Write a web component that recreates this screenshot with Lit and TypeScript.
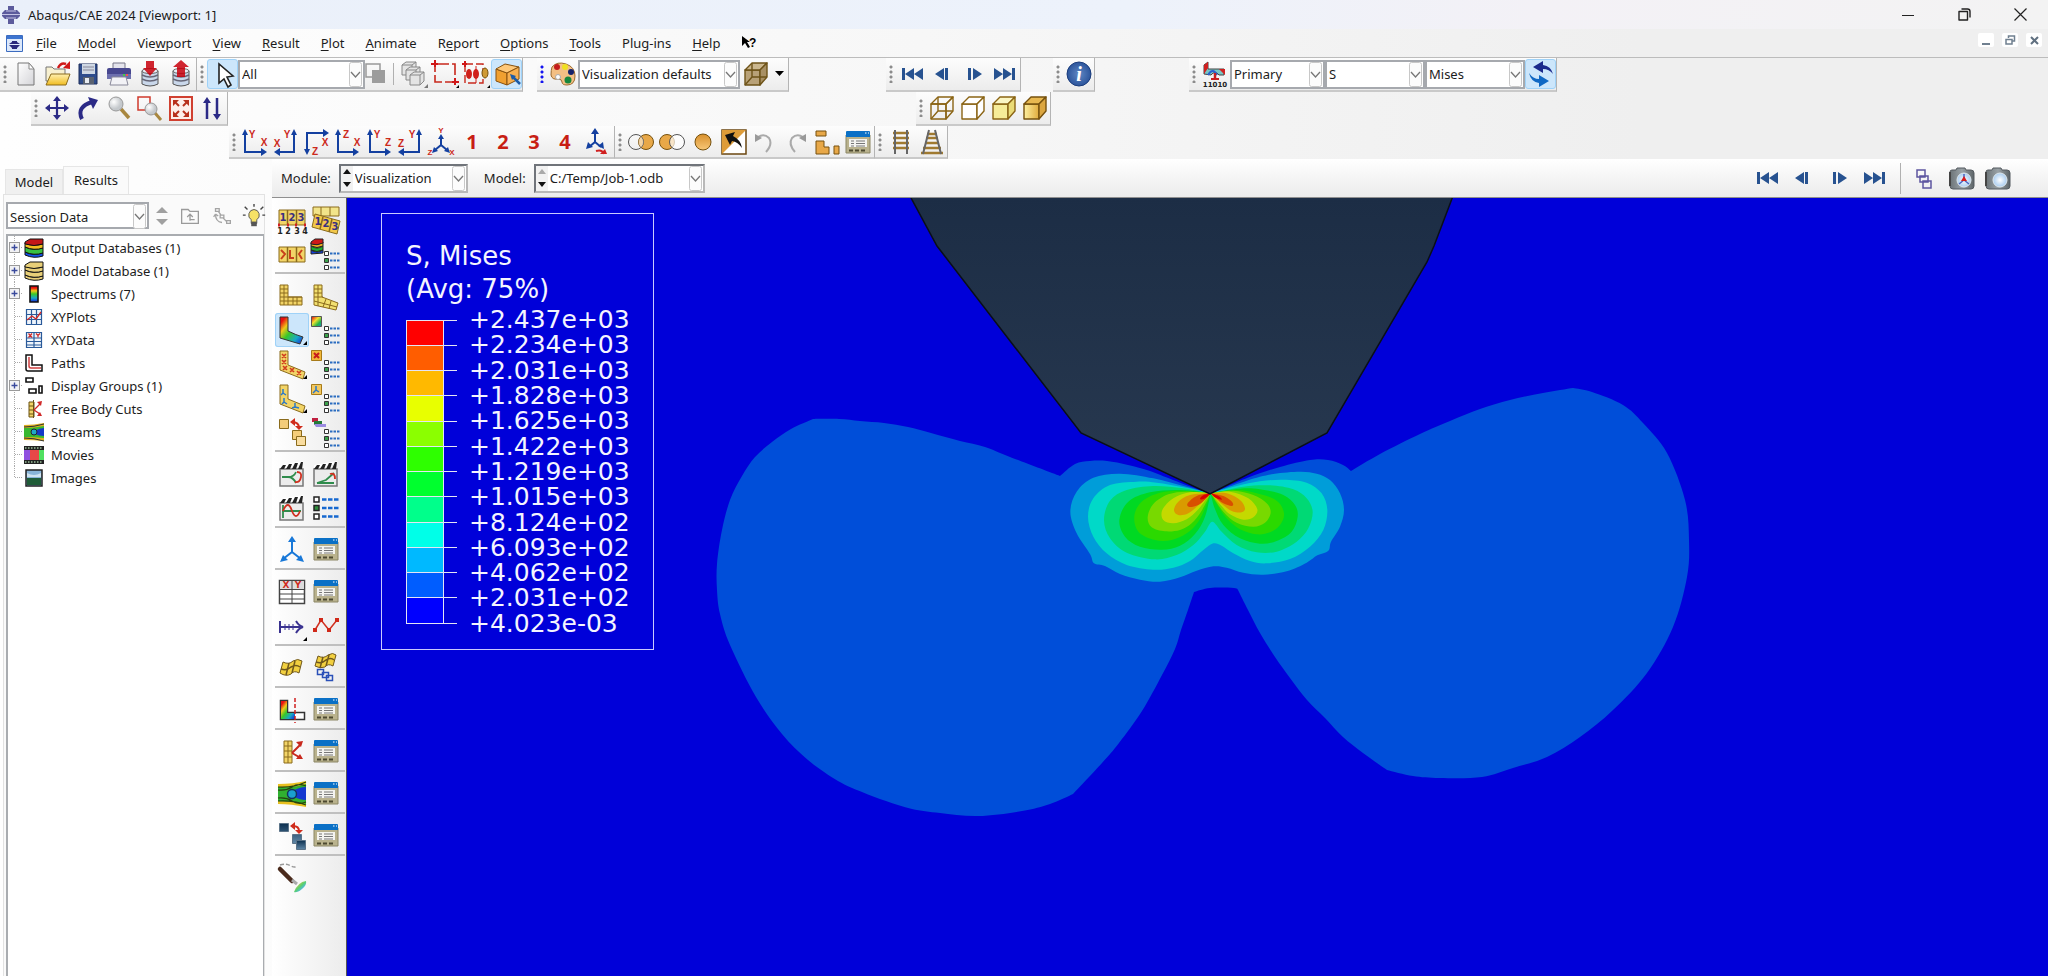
import { LitElement, html, svg, css, nothing, SVGTemplateResult, TemplateResult } from "lit";
import { customElement } from "lit/decorators.js";
import { classMap } from "lit/directives/class-map.js";

type Point = [number, number];

/** Cubic segments of a smooth open curve through the points. */
function curve(p: Point[]): string {
  let d = "";
  for (let i = 0; i < p.length - 1; i++) {
    const a = p[Math.max(i - 1, 0)], b = p[i], c = p[i + 1], e = p[Math.min(i + 2, p.length - 1)];
    const x1 = b[0] + (c[0] - a[0]) / 6, y1 = b[1] + (c[1] - a[1]) / 6;
    const x2 = c[0] - (e[0] - b[0]) / 6, y2 = c[1] - (e[1] - b[1]) / 6;
    d += `C${x1.toFixed(1)} ${y1.toFixed(1)} ${x2.toFixed(1)} ${y2.toFixed(1)} ${c[0]} ${c[1]}`;
  }
  return d;
}

/** Smooth closed outline that starts and ends in a sharp corner at the first point. */
const lobe = (points: Point[]) => `M${points[0].join(" ")}${curve([...points, points[0]])}Z`;

/** Outline built of smooth runs; every run begins at the corner where the previous one ended. */
const outline = (runs: Point[][]) => {
  let last = runs[0][0];
  let d = `M${last.join(" ")}`;
  runs.forEach((run, i) => {
    d += curve(i ? [last, ...run] : run);
    last = run[run.length - 1];
  });
  return d + "Z";
};

const OUTER: Point[][] = [
  [[1210, 494], [1173, 480], [1150, 471], [1128, 465], [1107, 461], [1090, 461], [1075, 464], [1060, 476]],
  [[1010, 457], [985, 447], [960, 441], [931, 433], [908, 427], [884, 423], [860, 421], [839, 419], [813, 419]],
  [[791, 429], [772, 442], [755, 457], [742, 476], [730, 500], [722, 530], [717, 564], [717, 590], [720, 614], [730, 645], [756, 697], [782, 734], [808, 760], [838, 781], [862, 792], [886, 801], [912, 809], [940, 813], [978, 816], [1022, 811], [1050, 804], [1073, 794]],
  [[1102, 763], [1119, 743], [1142, 711], [1162, 675], [1175, 649], [1181, 630], [1188, 610], [1194, 592]],
  [[1210, 588], [1234, 588], [1238, 590]],
  [[1248, 610], [1260, 633], [1275, 657], [1290, 678], [1307, 700], [1325, 718], [1343, 737], [1363, 753], [1387, 770]],
  [[1413, 776], [1440, 778], [1482, 777], [1513, 768], [1547, 757], [1580, 737], [1613, 710], [1647, 673], [1673, 627], [1687, 577], [1689, 540], [1685, 500], [1667, 453], [1643, 423], [1623, 405], [1592, 392], [1573, 388]],
  [[1543, 393], [1510, 400], [1480, 409], [1450, 421], [1420, 434], [1380, 454], [1351, 471]],
  [[1343, 465], [1328, 460], [1310, 460], [1280, 467], [1247, 478], [1210, 494]],
];

const TIP: Point = [512, 190];
const CONTOURS: { color: string; points: Point[] }[] = [
  { color: "#009dd9", points: [TIP, [430, 168], [340, 145], [240, 131], [160, 143], [110, 185], [91, 245], [110, 310], [150, 372], [162, 400], [195, 408], [240, 432], [300, 449], [360, 455], [420, 442], [470, 422], [520, 409], [560, 413], [610, 428], [670, 434], [740, 424], [800, 398], [832, 376], [865, 362], [873, 335], [900, 290], [912, 240], [900, 190], [870, 150], [830, 131], [780, 125], [700, 132], [620, 152]] },
  { color: "#00d9c8", points: [TIP, [430, 172], [350, 158], [290, 155], [210, 165], [160, 205], [144, 260], [160, 320], [200, 370], [260, 405], [340, 419], [400, 413], [450, 393], [490, 360], [520, 340], [545, 347], [580, 370], [630, 393], [680, 400], [750, 387], [810, 350], [850, 300], [862, 240], [845, 190], [800, 158], [730, 149], [660, 154], [590, 168]] },
  { color: "#00d975", points: [TIP, [430, 175], [340, 168], [260, 180], [210, 212], [192, 270], [210, 325], [260, 368], [345, 388], [410, 375], [460, 345], [495, 305], [517, 275], [545, 305], [590, 345], [650, 367], [710, 365], [770, 335], [805, 295], [818, 245], [800, 205], [760, 178], [690, 166], [610, 170]] },
  { color: "#00d923", points: [TIP, [420, 180], [330, 187], [265, 215], [238, 270], [255, 320], [300, 350], [365, 359], [420, 347], [465, 312], [495, 260]] },
  { color: "#00d923", points: [TIP, [600, 176], [660, 178], [730, 195], [765, 225], [773, 260], [755, 305], [710, 333], [660, 341], [600, 325], [550, 285], [524, 235]] },
  { color: "#2bd900", points: [TIP, [430, 182], [360, 188], [305, 215], [283, 258], [295, 305], [345, 330], [395, 330], [440, 310], [475, 275], [498, 228]] },
  { color: "#2bd900", points: [TIP, [590, 180], [650, 190], [710, 212], [732, 250], [720, 285], [690, 307], [650, 313], [600, 298], [560, 265], [529, 220]] },
  { color: "#78d900", points: [TIP, [440, 185], [385, 193], [340, 222], [323, 262], [335, 292], [375, 304], [420, 300], [455, 280], [485, 242]] },
  { color: "#78d900", points: [TIP, [580, 182], [640, 195], [680, 220], [692, 248], [675, 278], [640, 290], [590, 278], [550, 245]] },
  { color: "#c4d900", points: [TIP, [450, 187], [400, 205], [367, 240], [370, 270], [400, 280], [440, 268], [475, 238]] },
  { color: "#c4d900", points: [TIP, [570, 185], [625, 205], [652, 238], [640, 262], [610, 269], [570, 253], [540, 223]] },
  { color: "#d99b00", points: [TIP, [450, 195], [415, 215], [402, 240], [415, 255], [445, 250], [482, 220]] },
  { color: "#d99b00", points: [TIP, [560, 190], [600, 210], [615, 235], [605, 247], [575, 243], [543, 220]] },
  { color: "#d94e00", points: [TIP, [470, 198], [443, 220], [448, 231], [475, 225], [497, 207]] },
  { color: "#d94e00", points: [TIP, [555, 200], [578, 218], [575, 228], [550, 220], [530, 205]] },
  { color: "#d90000", points: [TIP, [490, 196], [480, 206], [488, 208], [502, 200]] },
  { color: "#d90000", points: [TIP, [535, 198], [546, 208], [538, 208], [522, 200]] },
];

const LEGEND_COLORS = ["#ff0000", "#ff5d00", "#ffb900", "#e8ff00", "#8bff00", "#2eff00", "#00ff2e", "#00ff8b", "#00ffe8", "#00b9ff", "#005dff", "#0000ff"];
const LEGEND_LABELS = ["+2.437e+03", "+2.234e+03", "+2.031e+03", "+1.828e+03", "+1.625e+03", "+1.422e+03", "+1.219e+03", "+1.015e+03", "+8.124e+02", "+6.093e+02", "+4.062e+02", "+2.031e+02", "+4.023e-03"];

/* ---------- shared pieces of icons ---------- */
const flyout = svg`<path d="M32 28v4h-4z" fill="#000"/>`;
const optionList = svg`
  <g fill="#fff" stroke="#333"><path d="M15.500 13.500h4v4h-4zM15.500 27.500h4v4h-4z"/><path d="M15.500 20.500h4v4h-4z" fill="#3aa04a"/></g>
  <path d="M21 15.500h10M21 22.500h10M21 29.500h10" stroke="#2a6cc0" stroke-width="2" stroke-dasharray="2.500 1"/>`;
const cube = (front: string, top: string, side: string, hidden: boolean, line = "#8a6414") => svg`
  <g stroke=${line} stroke-width="1.400" stroke-linejoin="round">
    <path d="M3 10h15v15H3z" fill=${front}/><path d="M3 10l7-7h15l-7 7z" fill=${top}/><path d="M18 10l7-7v14l-7 8z" fill=${side}/>
    ${hidden ? svg`<path d="M10 3v14h15M10 17l-7 8" fill="none"/>` : nothing}
  </g>`;
const axes = (path: string, heads: string, a: string, ax: number, ay: number, b: string, bx: number, by: number) => svg`
  <path d=${path} fill="none" stroke="#1440a0" stroke-width="2"/><path d=${heads} fill="#1440a0"/>
  <g class="axis"><text x=${ax} y=${ay}>${a}</text><text x=${bx} y=${by}>${b}</text></g>`;
const digit = (n: string) => svg`<text class="digit" x="14" y="21" text-anchor="middle">${n}</text>`;
const clapper = (inner: SVGTemplateResult) => svg`
  <path d="M5 12h23v17H5z" fill="#ececec" stroke="#777" stroke-width="1.500"/>
  <path d="M5 8l23-4v3l-23 4z" fill="#fff"/><path d="M5 12l3-4h3l-2 4zM11 12l3-5h3l-2 5zM17 12l3-6h3l-2 6zM23 12l3-7h2l-1 7z" fill="#222"/>${inner}`;
const database = svg`
  <path d="M6 11v13q8 4 16 0V11z" fill="#c9d7ea" stroke="#555"/><path d="M6 15q8 4 16 0M6 19q8 4 16 0" fill="none" stroke="#667" stroke-width="1.500"/>
  <ellipse cx="14" cy="11" rx="8" ry="2.500" fill="#e8eef6" stroke="#666"/>`;
const manager = svg`
  <path d="M5 9h24v18H5z" fill="#b9b28d" stroke="#8b8665"/><path d="M5 6q0-1 1-1h22q1 0 1 1v5H5z" fill="#0a70c6"/>
  <path d="M24 7h1.500M27 7h1" stroke="#fff"/>
  <path d="M8 13h18v8H8z" fill="#f4f4f0"/><path d="M10 15h3M15 15h9M10 17.500h3M15 17.500h9M10 20h3M15 20h9" stroke="#777"/>
  <path d="M8 23.500h4v2H8zM14 23.500h4v2h-4zM20 23.500h4v2h-4z" fill="#4d4930"/>`;
const bent = svg`<path d="M5 4h8v14l17 7-2 7-23-9z" fill="#f2d467" stroke="#8a6b1c"/>`;
const skipStart = svg`<path d="M4 8h3v12H4zM16 8v12l-9-6zM25 8v12l-9-6z" fill="#275290"/>`;
const stepBack = svg`<path d="M15 8v12l-9-6zM16 8h3v12h-3z" fill="#275290"/>`;
const stepFwd = svg`<path d="M8 8h3v12H8zM13 8v12l9-6z" fill="#275290"/>`;
const skipEnd = svg`<path d="M3 8v12l9-6zM12 8v12l9-6zM21 8h3v12h-3z" fill="#275290"/>`;
const camera = svg`
  <path d="M3 8q0-2 2-2h4l1-2h8l1 2h5q3 0 3 3v13q0 3-3 3H6q-3 0-3-3z" fill="url(#gSteel)" stroke="#555b60"/>
  <path d="M3 8v14" stroke="#444" stroke-width="2"/><circle cx="17" cy="16" r="7" fill="url(#gLens)" stroke="#dfe8ee"/>`;

const icons: Record<string, SVGTemplateResult> = {
  newFile: svg`<path d="M6 3h11l5 6v16H6z" fill="url(#gPage)" stroke="#777"/><path d="M17 3v6h5z" fill="#fff" stroke="#888"/>`,
  open: svg`<path d="M3 7h6l2 2h11v12H3z" fill="#f7f0d0" stroke="#777"/><path d="M8 14h19l-4 11H3z" fill="url(#gGold)" stroke="#8a6b1c"/><path d="M15 8q3-6 8-4" fill="none" stroke="#d01818" stroke-width="2.500"/><path d="M20 8l7 1V1z" fill="#d01818"/>`,
  save: svg`<path d="M5 4h18v20H5z" fill="#2e4c8c" stroke="#1d2c5a"/><path d="M8 4h13v10H8z" fill="#cfd8e4"/><path d="M9 7h11M9 10h11" stroke="#889"/><path d="M9 17h11v7H9z" fill="#5a6270"/><path d="M11 18h4v5h-4z" fill="#e8ecf2"/>`,
  print: svg`<path d="M8 3h12v8H8z" fill="#e4e4ec" stroke="#778"/><path d="M2 10q0-2 2-2h20q2 0 2 2v9H2z" fill="#47478f"/><path d="M2 14h24v5H2z" fill="#6d6fae"/><path d="M18 14h2v2h-2z" fill="#4c4"/><path d="M21 14h2v2h-2z" fill="#e55"/><path d="M7 17h14l2 8H5z" fill="#f2f2f6" stroke="#889"/>`,
  dbIn: svg`${database}<path d="M10 1h8v7h3l-7 8-7-8h3z" fill="#c8000c" fill-opacity=".85"/>`,
  dbOut: svg`${database}<path d="M10 17h8V7h4l-8-7-8 7h4z" fill="#c8000c" fill-opacity=".85"/>`,
  pointer: svg`<path d="M10 4v19l5-4 4 8 3-2-4-8 6-1z" fill="#fff" stroke="#222" stroke-width="1.600"/>`,
  overlap: svg`<path d="M3 4h14v13H3z" fill="none" stroke="#999" stroke-width="1.500"/><path d="M9 10h13v13H9z" fill="#9c9c9c"/>`,
  cubes: svg`<g fill="#e4e4e4" stroke="#888"><path d="M2 5l4-3h10v10l-4 3H2zM2 5h10v10M12 5l4-3"/><path d="M6 10l4-3h10v10l-4 3H6zM6 10h10v10M16 10l4-3"/><path d="M10 15l4-3h10v9l-4 4H10zM10 15h10v10M20 15l4-3"/></g><path d="M28 24v4h-4z" fill="#777"/>`,
  dragBox: svg`<path d="M4 4h20v18H4z" fill="none" stroke="#c8281c" stroke-width="1.600" stroke-dasharray="14 3"/><path d="M0 4h7M4 0v7M21 22h7M24 18v7" stroke="#d01818" stroke-width="2"/><path d="M28 25v3h-3z" fill="#000"/>`,
  dragItems: svg`<path d="M3 4h18v19H3z" fill="none" stroke="#c8281c" stroke-width="1.400" stroke-dasharray="8 3"/><path d="M0 4h5M3 1v6" stroke="#d01818" stroke-width="2"/><g fill="#d0201a"><ellipse cx="7" cy="14" rx="3" ry="5"/><ellipse cx="14" cy="14" rx="3" ry="5"/></g><path d="M14 6v17" stroke="#d0201a"/><ellipse cx="23" cy="13" rx="3" ry="5" fill="#cf9a34" stroke="#76520e"/><path d="M28 25v3h-3z" fill="#000"/>`,
  goldBox: svg`<g stroke="#87510e" stroke-linejoin="round"><path d="M3 9l11 4v12L3 21z" fill="#f0a030"/><path d="M3 9l9-5 14 3-12 6z" fill="#ffc878"/><path d="M14 13l12-6v12l-12 6z" fill="#f8b050"/></g><path d="M27 24l-7-7" stroke="#1c5ca8" stroke-width="2.500"/><path d="M17 14l6 2-4 4z" fill="#1c5ca8"/>`,
  palette: svg`<path d="M3 7q5-6 14-3 9 3 9 12 0 9-8 9-5 0-5-3 0-3-4-3-6 1-7-4 0-5 1-8z" fill="#f3bf84" stroke="#9b6a30"/><circle cx="8" cy="7" r="3" fill="#c41c1c"/><circle cx="16" cy="7" r="3" fill="#f0e020"/><circle cx="22" cy="12" r="3" fill="#14226c"/><circle cx="19" cy="20" r="3.500" fill="#17863c"/><circle cx="9" cy="17" r="2.500" fill="#fff" stroke="#aaa"/>`,
  tanCube: cube("#b8a177", "#cbb78e", "#a89064", true, "#6e5318"),
  skipStart, stepBack, stepFwd, skipEnd,
  info: svg`<circle cx="14" cy="14" r="12" fill="url(#gInfo)" stroke="#1c3d7c"/><text x="14" y="21" text-anchor="middle" font-family="Liberation Serif, serif" font-size="20" font-style="italic" font-weight="700" fill="#fff">i</text>`,
  fieldOut: svg`<path d="M3 14V5l4-3v7h16v6h-5q-4-5-8 0z" fill="#77c6c4" stroke="#444"/><path d="M3 5l4-3v6l-4 6zM18 9h6v6z" fill="#d02020"/><path d="M7 15q5-8 9 0" fill="none" stroke="#2a60d0" stroke-width="2"/><path d="M14 13v6" stroke="#c82020" stroke-width="2.500"/><path d="M10 19h8" stroke="#c82020" stroke-width="2"/><text x="14" y="27" text-anchor="middle" font-family="DejaVu Sans, sans-serif" font-size="7" font-weight="700" fill="#222">11010</text>`,
  refresh: svg`<path d="M26 14q-2-8-10-9V1L6 7l10 6V9q6 0 10 5z" fill="#1b2a8c"/><path d="M2 13q2 9 10 10v4l10-6-10-6v4q-6 0-10-6z" fill="#0f68c4"/>`,
  pan: svg`<path d="M14 5v18M5 14h18" stroke="#2b2a86" stroke-width="2.200"/><path d="M14 2l4 5h-8zM14 26l4-5h-8zM2 14l5-4v8zM26 14l-5-4v8z" fill="#2b2a86"/>`,
  rotate: svg`<path d="M8 25Q2 13 18 8" fill="none" stroke="#2b2a86" stroke-width="4"/><path d="M14 3l10 3-5 9z" fill="#2b2a86"/>`,
  magnify: svg`<path d="M16 15l8 9" stroke="#a8873f" stroke-width="3.500"/><circle cx="11" cy="10" r="7" fill="url(#gGlass)" stroke="#999"/>`,
  zoomBox: svg`<path d="M2 3h12v13H2z" fill="none" stroke="#d03a2c" stroke-width="1.500"/><path d="M19 19l6 7" stroke="#a8873f" stroke-width="3"/><circle cx="15" cy="15" r="6" fill="url(#gGlass)" stroke="#999"/>`,
  fit: svg`<path d="M3 3h22v23H3z" fill="#fdeeea" stroke="#d04030" stroke-width="2"/><g fill="#b8301c"><path d="M6 6h6L6 12zM22 6v6l-6-6zM6 23v-6l6 6zM22 23h-6l6-6z"/></g><path d="M8 8l4 4M20 8l-4 4M8 21l4-4M20 21l-4-4" stroke="#b8301c" stroke-width="2"/>`,
  cycle: svg`<path d="M9 25V8M19 4v17" stroke="#2b2a86" stroke-width="2.500"/><path d="M9 3l4 6H5zM19 26l4-6h-8z" fill="#2b2a86"/>`,
  wire: cube("none", "none", "none", true),
  hiddenLine: cube("#fff", "#fff", "#fff", false),
  filled: cube("#f6ec98", "#fbf6c4", "#eadb78", false),
  shaded: cube("url(#gShade)", "#e8b850", "#dba640", false, "#76510e"),
  vXY: axes("M4 6v18h17", "M4 1l3 6H1zM26 24l-6-4v8z", "Y", 11, 10, "X", 23, 18),
  vYX: axes("M22 6v18H7", "M22 1l3 6h-6zM2 24l6-4v8z", "Y", 15, 10, "X", 5, 19),
  vZX: axes("M4 21V5h16", "M26 5l-6-4v8zM4 27l3-6H1z", "Z", 12, 27, "X", 22, 18),
  vZXu: axes("M4 6v18h16", "M4 1l3 6H1zM25 24l-6-4v8z", "Z", 12, 10, "X", 23, 18),
  vYZ: axes("M5 6v18h16", "M5 1l3 6H2zM26 24l-6-4v8z", "Y", 12, 10, "Z", 23, 18),
  vZY: axes("M23 6v18H7", "M23 1l3 6h-6zM2 24l6-4v8z", "Y", 16, 10, "Z", 5, 19),
  iso: svg`<path d="M14 9v8l-6 5M14 17l6 5" fill="none" stroke="#1440a0" stroke-width="2"/><path d="M14 6l3 5h-6zM5 25l2-6 4 4zM23 25l-2-6-4 4z" fill="#1440a0"/><g class="axis small"><text x="14" y="5">Y</text><text x="3" y="27">Z</text><text x="25" y="27">X</text></g>`,
  d1: digit("1"), d2: digit("2"), d3: digit("3"), d4: digit("4"),
  isoSave: svg`<path d="M13 5v9l-6 5M13 14l6 5" fill="none" stroke="#1440a0" stroke-width="2"/><path d="M13 0l4 6H9zM4 21l2-7 5 5zM22 21l-1-7-5 4z" fill="#1440a0"/><path d="M14 23q6-2 8 3" fill="none" stroke="#d02020" stroke-width="2"/><path d="M18 26h7l-2-5z" fill="#d02020"/>`,
  boolOr: svg`<circle cx="19" cy="14" r="7.500" fill="#e8a848" stroke="#76510e"/><circle cx="9" cy="14" r="7.500" fill="none" stroke="#555"/><path d="M14 8.500q5 5.500 0 11-5-5.500 0-11z" fill="#fff" fill-opacity=".5"/>`,
  boolDiff: svg`<circle cx="9" cy="14" r="7.500" fill="#e8a848" stroke="#76510e"/><circle cx="19" cy="14" r="7.500" fill="#fff" fill-opacity=".7" stroke="#555"/>`,
  ball: svg`<circle cx="14" cy="14" r="8" fill="url(#gGold2)" stroke="#76510e"/>`,
  replace: svg`<path d="M2 2h24v24H2z" fill="#fff" stroke="#6b4710" stroke-width="1.500"/><path d="M2 2h24L2 26z" fill="#de9c38"/><path d="M5 7l10-3-2 4q8 4 9 12-4-6-10-7l-2 4z" fill="#111"/>`,
  undo: svg`<path d="M7 9q6-4 11 1 4 6-3 14" fill="none" stroke="#aaa" stroke-width="2"/><path d="M4 6v8l7-4z" fill="#999"/>`,
  redo: svg`<path d="M21 9q-6-4-11 1-4 6 3 14" fill="none" stroke="#aaa" stroke-width="2"/><path d="M24 6v8l-7-4z" fill="#999"/>`,
  parts: svg`<g fill="#e8a848" stroke="#76510e"><path d="M3 3h10v5H3zM3 13h8v6h5v7H3zM21 18h5v8h-5z"/></g>`,
  mgrSmall: svg`<g transform="translate(-3 -2)">${manager}</g>`,
  ladder: svg`<path d="M6 5h16M6 10h16M6 15h16M6 20h16" stroke="#a07a30" stroke-width="2.500"/><path d="M8 2v24M20 2v24" stroke="#666" stroke-width="2"/>`,
  track: svg`<path d="M9 6h10M8 10h12M7 15h14M5 20h18M3 25h22" stroke="#a07a30" stroke-width="2.500"/><path d="M11 2L5 26M17 2l6 24" stroke="#666" stroke-width="2"/>`,
  cascade: svg`<path d="M6 6h8v7H6zM9 12h8v6H9zM12 17h8v7h-8z" fill="none" stroke="#5d55a0" stroke-width="1.500"/>`,
  cameraAxes: svg`${camera}<path d="M17 16v-6M17 16l-5 4M17 16l5 4" stroke="#4a64c0" stroke-width="1.500"/><path d="M17 12l3 5h-6z" fill="#d81c1c"/>`,
  camera,
  folderUp: svg`<path d="M5 7h7l2 2h9v13H5z" fill="none" stroke="#9a9a9a" stroke-width="1.400"/><path d="M14 19v-6M11 15l3-3 3 3M14 18h5" fill="none" stroke="#9a9a9a" stroke-width="1.400"/>`,
  treeSync: svg`<path d="M7 6h4v3H7zM12 13h4v3h-4zM19 19h4v3h-4zM10 9l3 4M15 16l4 4M7 12q0 8 7 9M7 12l-2 3M7 12l3 2" fill="none" stroke="#a4a4a4" stroke-width="1.400"/>`,
  bulb: svg`<path d="M14 7a6 6 0 0 1 3 11v4h-6v-4a6 6 0 0 1 3-11z" fill="#f6e266" stroke="#555"/><path d="M11 20h6v5h-6z" fill="#555"/><path d="M14 1v3M4 4l3 3M24 4l-3 3M2 13h3M23 13h3" stroke="#444" stroke-width="1.500"/>`,

  /* 34px toolbox pictures */
  nodes: svg`<path d="M4 7h26v15H4z" fill="#f2d467" stroke="#8a6b1c"/><path d="M12.500 7v15M21.500 7v15" stroke="#8a6b1c" stroke-width="1.500"/><g class="num"><text x="8" y="18">1</text><text x="17" y="18">2</text><text x="26" y="18">3</text></g><path d="M3 22h2M12 22h2M20 22h2M29 22h2" stroke="#d02020" stroke-width="3"/><g class="tiny"><text x="5" y="31">1</text><text x="13" y="31">2</text><text x="22" y="31">3</text><text x="30" y="31">4</text></g>`,
  nodesBent: svg`<path d="M4 4h26v9H4z" fill="#f2e48a" stroke="#8a6b1c"/><path d="M12 4v9M21 4v9" stroke="#8a6b1c"/><path d="M6 11l25 7-3 13L3 24z" fill="#f2c84a" stroke="#8a6b1c"/><path d="M14 14l-3 12M23 16l-3 13" stroke="#8a6b1c" stroke-width="1.500"/><g class="num"><text x="9" y="22">1</text><text x="17" y="24">2</text><text x="26" y="27">3</text></g>`,
  orient: svg`<path d="M4 10h26v15H4z" fill="#f2d467" stroke="#8a6b1c"/><path d="M12.500 10v15M21.500 10v15" stroke="#8a6b1c" stroke-width="1.500"/><path d="M6 13l4 4-4 5M15 13v8h4M27 13l-3 4 3 5" fill="none" stroke="#c8401c" stroke-width="2"/>`,
  odbOptions: svg`<g stroke="#222"><path d="M2 13q6 4 12 0v3l-12 1z" fill="#1440e0"/><path d="M2 9q6 4 12 0v4q-6 3-12 0z" fill="#20b030"/><path d="M2 6q6 3 12-1v4q-6 3-12 0z" fill="#f0b020"/><path d="M2 5l4-3h8v4q-6 3-12 1z" fill="#d01818"/></g><g transform="translate(0 1)">${optionList}</g>`,
  lGrid: svg`<path d="M5 6h8v12h14v8H5z" fill="#f2d467" stroke="#8a6b1c"/><path d="M9 6v20M5 10h8M5 14h8M5 18h22M5 22h22M13 18v8M18 18v8M22 18v8" stroke="#8a6b1c"/>`,
  lBent: svg`<path d="M5 6h8v12l16 6-2 7-22-5z" fill="#f2e070" stroke="#8a6b1c"/><path d="M9 6v21M5 10h8M5 14h8M5 18h9M5 22l23 6M17 20l-3 8M22 22l-2 8" stroke="#8a6b1c" fill="none"/>`,
  contour: svg`<path d="M5 4h8v14q8 4 15 6l-3 7Q15 28 5 25z" fill="url(#gRainbow)" stroke="#333"/>${flyout}`,
  contourOpt: svg`<path d="M2.500 3.500h10v10h-10z" fill="url(#gDiag)" stroke="#555"/>${optionList}`,
  symbols: svg`${bent}<path d="M7 7l4 4M11 7l-4 4M7 13l4 4M11 13l-4 4M8 19l4 4M12 19l-4 4M15 21l4 4M19 21l-4 4M22 24l4 4M26 24l-4 4" stroke="#d03a1c" stroke-width="1.600"/>${flyout}`,
  symbolOpt: svg`<path d="M2.500 3.500h10v10h-10z" fill="#f2b83a" stroke="#a77a18"/><path d="M5 6l5 5M10 6l-5 5" stroke="#c81c1c" stroke-width="2"/>${optionList}`,
  material: svg`${bent}<path d="M8 8v4l-2 2M8 12l3 2M9 17v4l-2 2M9 21l3 2M20 22v4l-3 1M20 26l4 1" fill="none" stroke="#2a78c8" stroke-width="1.500"/>${flyout}`,
  materialOpt: svg`<path d="M2.500 3.500h10v10h-10z" fill="#f2c860" stroke="#a77a18"/><path d="M7 5v4l-3 3M7 9l3 2" fill="none" stroke="#2a78c8" stroke-width="1.500"/>${optionList}`,
  multi: svg`<g stroke="#8a6b1c" fill="#f4cd7a"><path d="M4.500 4.500h9v9h-9zM17.500 15.500h9v9h-9z"/><path d="M21.500 21.500h9v9h-9z" fill="#f9dda0"/></g><path d="M17 7q7 0 7 6" fill="none" stroke="#d02c1c" stroke-width="2"/><path d="M15 7l5-4v8zM24 15l-4-4h8z" fill="#d02c1c"/>`,
  multiOpt: svg`<path d="M3 3h6v4H3z" fill="#c02040"/><path d="M5 6h8v4H5z" fill="#257a38"/><path d="M5 9h12v3H7z" fill="#9a8be0"/><g transform="translate(0 1)">${optionList}</g>`,
  animTime: clapper(svg`<path d="M7 20h6q6 0 8-5M13 20q5 0 8 6" fill="none" stroke="#2f8c4c" stroke-width="1.800"/><path d="M22 15q5 0 4 5-1 6-6 5" fill="none" stroke="#d03020" stroke-width="1.800"/>`),
  animScale: clapper(svg`<path d="M8 26l9-3 8-7M8 26h17" fill="none" stroke="#2f8c4c" stroke-width="1.800"/><path d="M21 17q5-2 5 5" fill="none" stroke="#d03020" stroke-width="1.800"/>`),
  animHarm: clapper(svg`<path d="M7 20h19M8 14v13" stroke="#2f8c4c" stroke-width="1.800"/><path d="M8 20q5-12 9 0 4 10 8 0" fill="none" stroke="#d03020" stroke-width="1.800"/>`),
  animOpt: svg`<g fill="#fff" stroke="#222" stroke-width="1.500"><path d="M5 6h5v5H5zM5 23h5v5H5z"/><path d="M5 14.500h5v5H5z" fill="#2f8c3c"/></g><path d="M13 8.500h17M13 17h17M13 25.500h17" stroke="#1668d0" stroke-width="2.500" stroke-dasharray="4.500 1.500"/>`,
  csys: svg`<path d="M17 8v11l-9 7M17 19l9 7" fill="none" stroke="#1878d8" stroke-width="2"/><path d="M17 3l4 6h-8zM5 29l3-7 5 5zM29 29l-3-7-5 5z" fill="#1878d8"/>`,
  manager,
  xyData: svg`<path d="M4.500 5.500h25v23h-25z" fill="#fff" stroke="#444" stroke-width="1.500"/><path d="M5 6h24v8H5z" fill="#dcdcdc"/><path d="M5 14.500h24M5 19h24M5 24h24M17 6v23" stroke="#444"/><g class="redx"><text x="11" y="13">X</text><text x="23" y="13">Y</text></g>`,
  probe: svg`<path d="M5 18h20M5 12v12" stroke="#3a3290" stroke-width="2"/><path d="M10 15v6M14 15v6M18 15v6" stroke="#3a3290"/><path d="M21 12q3 5 7 6-4 1-7 6" fill="none" stroke="#3a3290" stroke-width="2"/>${flyout}`,
  polyline: svg`<path d="M6 21l6-10 8 10 8-10" fill="none" stroke="#d03020" stroke-width="1.500"/><path d="M4 19h4v4H4zM10 9h4v4h-4zM18 19h4v4h-4zM26 9h4v4h-4z" fill="#d02818"/>`,
  surf: svg`<path d="M8 11q6 3 10-1 5-3 9 0l-3 12q-5-3-8 1-5 3-11-1z" fill="#f2d040" stroke="#70581c"/><path d="M14 12l-3 12M20 10l-3 12M6 18q6 2 10-2 5-3 9 0" fill="none" stroke="#70581c" stroke-width="1.500"/>`,
  surfMulti: svg`<path d="M9 5q6 3 10-1 5-3 8 0l-3 11q-5-3-8 1-5 2-10-1z" fill="#f2d040" stroke="#70581c"/><path d="M14 6l-3 11M20 4l-3 11M7 11q6 2 10-2 5-3 8 0" fill="none" stroke="#70581c" stroke-width="1.500"/><path d="M8.500 18.500h6v5h-6zM13.500 21.500h6v5h-6zM17.500 24.500h6v5h-6z" fill="none" stroke="#2a50b8" stroke-width="1.500"/>`,
  cut: svg`<path d="M5.500 7.500h7v12h17v7h-24z" fill="#fff" stroke="#333" stroke-width="1.500"/><path d="M6 8h6v12h8v6H6z" fill="url(#gRainbow)"/><path d="M20 5v25" stroke="#d02020" stroke-width="1.500" stroke-dasharray="4 2"/>`,
  freeBody: svg`<path d="M9 6h8v22H9z" fill="#f2d467" stroke="#8a6b1c"/><path d="M13 6v22M9 11h8M9 16h8M9 22h8" stroke="#8a6b1c"/><path d="M17 18l8-8M17 18l7 4" stroke="#c8281c" stroke-width="2"/><path d="M28 6l-7 1 5 5zM28 24l-7 0 4-5z" fill="#c8281c"/>`,
  stream: svg`<path d="M3 7q15 0 28-3v26Q16 27 3 27z" fill="#e8c020"/><path d="M3 10q15 1 28-3v20Q16 24 3 24z" fill="#30b030"/><path d="M18 14q6-4 13-4v13q-7 0-13-4z" fill="#1438d0"/><path d="M3 10q15 1 28-5M3 24q15-1 28 4M3 13q8 1 14-3t14-1M3 21q8-1 14 3t14 1" fill="none" stroke="#26420e" stroke-width="1.200"/><circle cx="17" cy="17" r="4.500" fill="#1aa0d0" stroke="#14345c" stroke-width="1.500"/>`,
  imageMulti: svg`<g fill="url(#gNavy)" stroke="#5b7388"><path d="M4.500 4.500h9v8h-9zM17.500 15.500h9v9h-9z"/><path d="M21.500 21.500h9v9h-9z"/></g><path d="M18 7q6 0 6 5" fill="none" stroke="#d02c1c" stroke-width="2"/><path d="M15 7l5-4v8zM24 15l-4-4h8z" fill="#d02c1c"/>`,
  brush: svg`<path d="M5 4q6-2 11 1 4 2 6 0" fill="none" stroke="#999" stroke-width="1.500" stroke-dasharray="4 2"/><path d="M5 8l12 12" stroke="#4a2a1c" stroke-width="4.500" stroke-linecap="round"/><path d="M17 19l5 4" stroke="#aaa" stroke-width="3"/><path d="M19 31q4-10 12-11 1 4-4 8t-8 3z" fill="url(#gBrush)"/>`,
};

const treeIcons: SVGTemplateResult[] = [
  svg`<g stroke="#111"><path d="M1 14q8 4 18 1v3q-9 3-18-1z" fill="#1450e8"/><path d="M1 9q8 4 18 1v5q-9 3-18-1z" fill="#38c040"/><path d="M1 5q8 4 18 1v4q-9 3-18-1z" fill="#f0c020"/><path d="M1 4l5-3h13v5q-9 3-18 0z" fill="#c41818"/></g>`,
  svg`<g stroke="#111" fill="#e8cf78"><path d="M1 14q8 4 18 1v3q-9 3-18-1z"/><path d="M1 9q8 4 18 1v5q-9 3-18-1z"/><path d="M1 5q8 4 18 1v4q-9 3-18-1z"/><path d="M1 4l5-3h13v5q-9 3-18 0z"/></g>`,
  svg`<path d="M6 2h8v16H6z" fill="url(#gBar)" stroke="#111" stroke-width="1.600"/>`,
  svg`<path d="M2.500 2.500h15v15h-15zM7.500 2v16M12.500 2v16M2 7.500h16M2 12.500h16" fill="#eef4fb" stroke="#2a5a9a" stroke-width="1.200"/><path d="M3 13l5-4 4 3 5-7" fill="none" stroke="#d02828" stroke-width="1.300"/>`,
  svg`<path d="M2.500 2.500h15v15h-15zM10 2v16M2 8h16M2 11.500h16M2 15h16" fill="#eef4fb" stroke="#2a5a9a" stroke-width="1.200"/><path d="M4.500 3.500l3.500 4M8 3.500l-3.500 4M12 3.500l2 2 2-2M14 5.500v2" fill="none" stroke="#d02828" stroke-width="1.200"/>`,
  svg`<path d="M2 2h6v10h10v6H4q-2 0-2-2z" fill="#fff" stroke="#111" stroke-width="1.500"/><path d="M5 4v9q0 2 2 2h10" fill="none" stroke="#d04040" stroke-width="1.500"/>`,
  svg`<path d="M2 2h7v4H2zM5 13h7v4H5zM15 10h3v7h-3z" fill="#fff" stroke="#111" stroke-width="1.600"/>`,
  svg`<path d="M5 3h5v15H5z" fill="#f2d467" stroke="#6b5314"/><path d="M5 7h5M5 11h5M5 15h5M9.500 1v18" stroke="#6b5314"/><path d="M10 11l6-6M10 11l6 4" stroke="#d02828" stroke-width="1.300"/><path d="M18 2l-5 1 4 4zM18 17l-5 0 3-4z" fill="#d02828"/>`,
  svg`<path d="M0 3q10 0 20-2v18q-10-1-20-1z" fill="#e0b020"/><path d="M0 6q10 0 20-2v12q-10-1-20-1z" fill="#38b830"/><path d="M11 9q4-3 9-3v8q-5 0-9-2z" fill="#1438c8"/><path d="M0 5q10 0 20-3M0 16q10 0 20 3" stroke="#333" fill="none"/><circle cx="10" cy="10" r="3" fill="#20a8c8" stroke="#223"/>`,
  svg`<path d="M0 1h20v18H0z" fill="#222"/><path d="M1 3h18M1 17h18" stroke="#9ac09a" stroke-width="1.500" stroke-dasharray="1.500 1.500"/><path d="M0 5h6v10H0z" fill="#9050e0"/><path d="M6 5h9v10H6z" fill="#e84848"/><path d="M15 5h5v10h-5z" fill="#50e060"/>`,
  svg`<path d="M2 2h16v16H2z" fill="#88b4d8" stroke="#222" stroke-width="1.500"/><path d="M3 10h14v7H3z" fill="#1f5c38"/><path d="M3 5q7 4 14 0v4H3z" fill="#cfe2f0"/>`,
];

const TREE: { label: string; open?: boolean }[] = [
  { label: "Output Databases (1)", open: true }, { label: "Model Database (1)", open: true }, { label: "Spectrums (7)", open: true },
  { label: "XYPlots" }, { label: "XYData" }, { label: "Paths" }, { label: "Display Groups (1)", open: true },
  { label: "Free Body Cuts" }, { label: "Streams" }, { label: "Movies" }, { label: "Images" },
];

/* [text before the mnemonic, mnemonic, text after] */
const MENU: [string, string, string][] = [
  ["", "F", "ile"], ["", "M", "odel"], ["Vie", "w", "port"], ["", "V", "iew"], ["", "R", "esult"], ["", "P", "lot"],
  ["", "A", "nimate"], ["R", "e", "port"], ["", "O", "ptions"], ["", "T", "ools"], ["Plu", "g", "-ins"], ["", "H", "elp"],
];

const TOOLBOX: [string, string][][] = [
  [["nodes", "nodesBent"], ["orient", "odbOptions"]],
  [["lGrid", "lBent"], ["contour", "contourOpt"], ["symbols", "symbolOpt"], ["material", "materialOpt"], ["multi", "multiOpt"]],
  [["animTime", "animScale"], ["animHarm", "animOpt"]],
  [["csys", "manager"]],
  [["xyData", "manager"], ["probe", "polyline"]],
  [["surf", "surfMulti"]],
  [["cut", "manager"]],
  [["freeBody", "manager"]],
  [["stream", "manager"]],
  [["imageMulti", "manager"]],
  [["brush", ""]],
];

@customElement("app-root")
export class AppRoot extends LitElement {
  static styles = css`
    :host { display: flex; flex-direction: column; height: 100vh; overflow: hidden; font: 13px/20px "Noto Sans", "Open Sans", sans-serif; color: #1c1c1c; background: linear-gradient(90deg, #fefefe, #f7f7f7 45%, #efefef 80%); }
    * { box-sizing: border-box; }
    button { font: inherit; color: inherit; background: none; border: 1px solid transparent; padding: 0; margin: 0; display: flex; align-items: center; justify-content: center; }
    svg { display: block; flex: none; overflow: visible; }
    .defs { width: 0; height: 0; position: absolute; }

    .title { display: flex; align-items: center; height: 29px; padding-left: 2px; background: linear-gradient(90deg, #eaf0fa, #edf2fb 55%, #f3f1f6 75%, #f3f3f3); }
    .title h1 { flex: 1; margin: 0 0 0 8px; font-size: 13px; font-weight: 400; }
    .title button { width: 56px; height: 28px; }

    .menubar { display: flex; align-items: center; height: 29px; border-bottom: 1px solid #bcbcbc; padding: 0 6px; }
    .menubar nav { display: flex; flex: 1; align-items: center; gap: 21px; margin-left: 13px; }
    .menubar a { color: inherit; text-decoration: none; }
    .menubar u { text-underline-offset: 2px; }
    .child { display: flex; gap: 8px; }
    .child button { width: 16px; height: 14px; background: #fff; border-radius: 2px; margin-bottom: 6px; }

    .row { display: flex; height: 34px; }
    .row.last { height: 33px; }
    .group { display: flex; align-items: center; height: 100%; background: linear-gradient(#fdfdfd, #ececec); border-right: 1px solid #b4b4b4; border-bottom: 2px solid #c9c9c9; }
    .grip { width: 10px; height: 18px; background: radial-gradient(circle at 5px 2px, #8c8c8c 1px, transparent 2px) 0 0 / 10px 5px; }
    .grip.blue { background-image: radial-gradient(circle at 5px 2px, #1414f0 1px, transparent 2px); }
    .tool { width: 31px; height: 30px; flex: none; }
    .tool.narrow { width: 24px; }
    .tool.menu { width: 17px; }
    .active { background: #cce6fb; border-color: #9fd2f8; border-radius: 3px; }
    .bar { width: 1px; height: 22px; background: #b0b0b0; margin: 0 4px; }
    .g-color { margin-left: 14px; }
    .g-play { margin-left: 97px; }
    .g-info { margin-left: 32px; }
    .g-field { margin-left: 94px; }
    .g-view { margin-left: 31px; }
    .g-render { margin-left: 688px; }
    .g-axes { margin-left: 229px; padding-right: 3px; }
    .g-bool { padding-right: 1px; }

    .combo { display: grid; grid-template-columns: auto 1fr; flex: none; height: 29px; background: #fff; border: 2px solid #a6a9ae; }
    .combo select { grid-area: 1 / 2; width: 100%; min-width: 0; appearance: none; border: 0; outline: 0; background: none; font: inherit; color: inherit; padding: 0 16px 0 2px; }
    .combo .chevron { grid-area: 1 / 2; justify-self: end; pointer-events: none; }
    .spin { grid-area: 1 / 1; display: flex; flex-direction: column; width: 12px; background: #f2f2f2; }
    .spin button { flex: 1; }
    .w94 { width: 95px; } .w100 { width: 100px; } .w126 { width: 127px; } .w162 { width: 162px; }
    .w130 { width: 129px; } .w172 { width: 171px; } .w143 { width: 143px; }
    .sunk { border-color: #70747a #b8b8b8 #b8b8b8 #70747a; }

    .axis { font: 700 10px "Liberation Sans", sans-serif; fill: #cc2a1c; text-anchor: middle; }
    .axis.small { font-size: 8px; }
    .digit { font: 700 20px "Open Sans", sans-serif; fill: #c81e14; }
    .num { font: 700 10px "DejaVu Sans", sans-serif; fill: #3a2f80; text-anchor: middle; }
    .tiny { font: 700 8px "DejaVu Sans", sans-serif; fill: #222; text-anchor: middle; }
    .redx { font: 700 9px "DejaVu Sans", sans-serif; fill: #d02c1c; text-anchor: middle; }

    main { display: flex; flex: 1; min-height: 0; }
    aside { display: flex; flex-direction: column; width: 272px; padding: 7px 7px 0 3px; }
    .tabs { display: flex; align-items: flex-end; height: 28px; padding-left: 2px; }
    .tabs button { height: 25px; width: 58px; background: #f0f0f0; border-color: #e6e6e6; border-bottom: 0; }
    .tabs button.current { height: 28px; width: 66px; background: #fafafa; padding-bottom: 2px; }
    .panel { display: flex; flex-direction: column; flex: 1; min-height: 0; background: #fafafa; border: 1px solid #e2e2e2; border-bottom: 0; padding: 7px 0 0 2px; }
    .panel-tools { display: flex; align-items: center; height: 27px; margin-bottom: 5px; }
    .panel-tools .combo { height: 27px; }
    .updown { width: 25px; flex: none; display: flex; flex-direction: column; gap: 6px; align-items: center; }
    .panel-tools .tool { width: 32px; }
    .tree { list-style: none; margin: 0; padding: 0; flex: 1; background: #fff; border: 2px solid #a9acb0; border-right-width: 1px; border-bottom: 0; }
    .tree li { display: flex; align-items: center; height: 23px; white-space: nowrap; }
    .tree button { display: block; border: 0; }
    .tree .pic { margin: 0 7px 0 0; }

    .work { display: flex; flex-direction: column; flex: 1; min-width: 0; }
    .context { display: flex; align-items: center; height: 39px; padding-left: 9px; background: linear-gradient(#ffffff, #ebebeb); border-bottom: 1px solid #8f8f8f; }
    .context label { margin-right: 8px; }
    .context label.second { margin: 0 8px 0 16px; }
    .context .push { flex: 1; }
    .context .tool { width: 36px; }
    .context .bar { height: 31px; margin: 0 6px 0 7px; }
    .context .end { width: 33px; }
    .stage { display: flex; flex: 1; min-height: 0; }
    .toolbox { width: 74px; padding: 0 3px; background: linear-gradient(90deg, #ffffff, #ececec); overflow: hidden; }
    .toolbox section { padding: 5px 0 1px; border-bottom: 2px solid #bfbfbf; width: 70px; display: grid; grid-template-columns: 34px 34px; }
    .toolbox section:last-child { border: 0; }
    .toolbox button { width: 34px; height: 34px; border: 0; }
    .toolbox button.active { box-shadow: inset 0 0 0 1px #9fd2f8; }

    .canvas { position: relative; flex: 1; min-width: 0; background: #0000d9; border-left: 1px solid #555; overflow: hidden; }
    .canvas > svg { width: 100%; height: 100%; }
    .legend { position: absolute; left: 34px; top: 15px; width: 273px; border: 1px solid #c9c9ff; padding: 26px 0 13px 24px; color: #f4f4ff; font: 25px/33px "DejaVu Sans", Verdana, sans-serif; }
    .caption { font-size: 26px; }
    .scale { display: flex; align-items: center; height: 329px; margin-top: 1px; }
    .swatches { display: flex; flex-direction: column; width: 51px; height: 304px; margin-right: 12px; border-top: 1px solid #e4e4f4; }
    .swatches div { flex: 1; border-bottom: 1px solid #e4e4f4; display: flex; }
    .swatches i { width: 38px; border: solid #e4e4f4; border-width: 0 1px; }
    .labels { display: flex; flex-direction: column; height: 329px; margin: 0; padding: 0; list-style: none; }
    .labels li { flex: 1; line-height: 25px; }
  `;

  private icon(name: string, size = 28, vb = 28): TemplateResult {
    return html`<svg width=${size} height=${size} viewBox="0 0 ${vb} ${vb}" aria-hidden="true">${icons[name]}</svg>`;
  }

  private tool(name: string, extra: Record<string, boolean> = {}): TemplateResult {
    return html`<button class=${classMap({ tool: true, ...extra })} aria-label=${name}>${this.icon(name)}</button>`;
  }

  private combo(label: string, value: string, width: string, id = "", spin = false): TemplateResult {
    return html`<div class="combo ${width} ${spin ? "sunk" : ""}">
      ${spin ? html`<span class="spin">
        <button aria-label="Previous"><svg width="8" height="5"><path d="M0 5h8L4 0z" fill=${id === "model" ? "#aaa" : "#111"}/></svg></button>
        <button aria-label="Next"><svg width="8" height="5"><path d="M0 0h8L4 5z" fill="#111"/></svg></button></span>` : nothing}
      <select id=${id || nothing} aria-label=${label}><option>${value}</option></select>
      <svg class="chevron" width="14" height="25"><rect x="0.5" y="0.5" width="12" height="24" rx="2" fill="#fcfcfc" stroke="#c8c8c8"/><path d="M2 10l4.500 5 4.500-5" fill="none" stroke="#777" stroke-width="1.300"/></svg>
    </div>`;
  }

  private defs() {
    const rainbow = svg`<stop offset="0" stop-color="#e81010"/><stop offset=".12" stop-color="#e81010"/><stop offset=".3" stop-color="#f0c818"/><stop offset=".5" stop-color="#38c828"/><stop offset=".75" stop-color="#18a8c8"/><stop offset="1" stop-color="#1420d8"/>`;
    return html`<svg class="defs" aria-hidden="true"><defs>
      <linearGradient id="gPage" x2="1" y2="1"><stop stop-color="#fff"/><stop offset="1" stop-color="#d4d4d8"/></linearGradient>
      <linearGradient id="gGold" x2="0" y2="1"><stop stop-color="#fff0b0"/><stop offset="1" stop-color="#f0bc20"/></linearGradient>
      <linearGradient id="gGold2" x2="0" y2="1"><stop stop-color="#d8902c"/><stop offset="1" stop-color="#f8c878"/></linearGradient>
      <linearGradient id="gShade" x2="1"><stop stop-color="#fdf0a0"/><stop offset="1" stop-color="#e0aa3c"/></linearGradient>
      <linearGradient id="gSteel" x2="1"><stop stop-color="#6c7478"/><stop offset=".5" stop-color="#9aa2a6"/><stop offset="1" stop-color="#5c6468"/></linearGradient>
      <linearGradient id="gNavy" x2="0" y2="1"><stop stop-color="#0c3050"/><stop offset="1" stop-color="#6088a8"/></linearGradient>
      <linearGradient id="gBrush" x2="1" y2="1"><stop offset=".2" stop-color="#e8c848"/><stop offset=".5" stop-color="#58d070"/><stop offset=".7" stop-color="#50b8e0"/><stop offset=".9" stop-color="#f07050"/></linearGradient>
      <radialGradient id="gLens"><stop stop-color="#fff"/><stop offset="1" stop-color="#a8ccf0"/></radialGradient>
      <radialGradient id="gGlass" cx=".35" cy=".35"><stop stop-color="#fff"/><stop offset="1" stop-color="#c4c8cc"/></radialGradient>
      <radialGradient id="gInfo"><stop stop-color="#6088c4"/><stop offset="1" stop-color="#2c559c"/></radialGradient>
      <linearGradient id="gRainbow" x1="0" y1="0" x2="1" y2="1">${rainbow}</linearGradient>
      <linearGradient id="gDiag" x1="0" y1="0" x2="1" y2="1"><stop offset=".1" stop-color="#e83018"/><stop offset=".4" stop-color="#f0e030"/><stop offset=".7" stop-color="#28b848"/><stop offset="1" stop-color="#1888c8"/></linearGradient>
      <linearGradient id="gBar" x2="0" y2="1">${rainbow}</linearGradient>
    </defs></svg>`;
  }

  private branch(open: boolean, last: boolean) {
    return html`<svg width="16" height="23" aria-hidden="true">
      <path d="M6.500 0V${last ? 12 : 23}M7 11.500h7" fill="none" stroke="#aaa" stroke-dasharray="1 1"/>
      ${open ? svg`<rect x="1.500" y="6.500" width="10" height="10" fill="#f2f2f4" stroke="#9a9a9a"/><path d="M3.500 11.500h6M6.500 8.500v6" stroke="#3a4a9c" stroke-width="1.400"/>` : nothing}</svg>`;
  }

  render() {
    return html`
      ${this.defs()}
      <header class="title">
        <svg width="18" height="20" viewBox="0 0 18 20"><path d="M6 1h6v4h3l3 3v3l-3 3h-3v5H6v-5H3l-3-3V8l3-3h3z" fill="#5c5b9c"/><path d="M0 9.500h18M4 6h10M4 13h10" stroke="#c4c4e4"/></svg>
        <h1>Abaqus/CAE 2024 [Viewport: 1]</h1>
        <button aria-label="Minimize"><svg width="12" height="12"><path d="M0 6.500h12" stroke="#222"/></svg></button>
        <button aria-label="Restore"><svg width="13" height="13"><path d="M1 3.500h8.500v8.500H1z" fill="none" stroke="#222" stroke-width="1.400" stroke-linejoin="round"/><path d="M3.500 1h6q2.500 0 2.500 2.500v6" fill="none" stroke="#222" stroke-width="1.400"/></svg></button>
        <button aria-label="Close"><svg width="13" height="13"><path d="M.5.5l12 12M12.500.5l-12 12" stroke="#222" stroke-width="1.200"/></svg></button>
      </header>
      <div class="menubar">
        <svg width="17" height="17"><path d="M.5.500h16v16H.5z" fill="#dce8fa" stroke="#3c6cc0"/><path d="M1 1h15v3H1z" fill="#3c74d0"/><path d="M6 6h5v1l3 2v1l-3 3v1H6v-1l-3-3V9l3-2z" fill="#28287c"/><path d="M3 9.500h11" stroke="#dce8fa"/></svg>
        <nav>
          ${MENU.map(([a, b, c]) => html`<a href="#">${a}<u>${b}</u>${c}</a>`)}
          <a href="#" aria-label="Context help"><svg width="16" height="16"><path d="M1 1v10l3-3 3 5 2-1-3-5h3z" fill="#000"/><text x="8" y="12" font-size="12" font-weight="700" font-family="Liberation Sans, sans-serif">?</text></svg></a>
        </nav>
        <div class="child">
          <button aria-label="Minimize viewport"><svg width="8" height="10"><path d="M0 8h8v2H0z" fill="#708090"/></svg></button>
          <button aria-label="Restore viewport"><svg width="10" height="10"><path d="M3.500 3V1h6v5h-2M1 4.500h6V9H1z" fill="none" stroke="#708090" stroke-width="1.500"/></svg></button>
          <button aria-label="Close viewport"><svg width="9" height="9"><path d="M1 1l7 7M8 1L1 8" stroke="#607080" stroke-width="2"/></svg></button>
        </div>
      </div>

      <div class="row">
        <div class="group"><span class="grip"></span>${["newFile", "open", "save", "print", "dbIn", "dbOut"].map((n) => this.tool(n))}</div>
        <div class="group"><span class="grip"></span>${this.tool("pointer", { active: true })}${this.combo("Selection filter", "All", "w126")}
          ${this.tool("overlap", { narrow: true })}<span class="bar"></span>${this.tool("cubes")}${this.tool("dragBox")}${this.tool("dragItems")}${this.tool("goldBox", { active: true })}</div>
        <div class="group g-color"><span class="grip blue"></span>${this.tool("palette")}${this.combo("Color code", "Visualization defaults", "w162")}${this.tool("tanCube")}
          <button class="tool menu" aria-label="More"><svg width="10" height="6"><path d="M0 0h9L4.500 5z"/></svg></button></div>
        <div class="group g-play"><span class="grip"></span>${["skipStart", "stepBack", "stepFwd", "skipEnd"].map((n) => this.tool(n))}</div>
        <div class="group g-info"><span class="grip"></span>${this.tool("info")}</div>
        <div class="group g-field"><span class="grip"></span>${this.tool("fieldOut")}${this.combo("Variable type", "Primary", "w94")}${this.combo("Output variable", "S", "w100")}${this.combo("Invariant", "Mises", "w100")}${this.tool("refresh", { active: true })}</div>
      </div>
      <div class="row">
        <div class="group g-view"><span class="grip"></span>${["pan", "rotate", "magnify", "zoomBox", "fit", "cycle"].map((n) => this.tool(n))}</div>
        <div class="group g-render"><span class="grip"></span>${["wire", "hiddenLine", "filled", "shaded"].map((n) => this.tool(n))}</div>
      </div>
      <div class="row last">
        <div class="group g-axes"><span class="grip"></span>${["vXY", "vYX", "vZX", "vZXu", "vYZ", "vZY", "iso", "d1", "d2", "d3", "d4", "isoSave"].map((n) => this.tool(n))}</div>
        <div class="group g-bool"><span class="grip"></span>${["boolOr", "boolDiff", "ball", "replace", "undo", "redo", "parts", "mgrSmall"].map((n) => this.tool(n))}</div>
        <div class="group"><span class="grip"></span>${["ladder", "track"].map((n) => this.tool(n))}</div>
      </div>

      <main>
        <aside>
          <div class="tabs"><button>Model</button><button class="current">Results</button></div>
          <div class="panel">
            <div class="panel-tools">
              ${this.combo("Tree contents", "Session Data", "w143")}
              <span class="updown"><svg width="12" height="6"><path d="M0 6h12L6 0z" fill="#a0a0a0"/></svg><svg width="12" height="6"><path d="M0 0h12L6 6z" fill="#a0a0a0"/></svg></span>
              ${["folderUp", "treeSync", "bulb"].map((n) => html`<button class="tool" aria-label=${n}>${this.icon(n, 26)}</button>`)}
            </div>
            <ul class="tree">
              ${TREE.map((t, i) => html`<li>
                ${t.open ? html`<button aria-label="Expand">${this.branch(true, false)}</button>` : this.branch(false, i === TREE.length - 1)}
                <svg class="pic" width="20" height="20">${treeIcons[i]}</svg><span>${t.label}</span></li>`)}
            </ul>
          </div>
        </aside>
        <div class="work">
          <div class="context">
            <label for="module">Module:</label>${this.combo("Module", "Visualization", "w130", "module", true)}
            <label class="second" for="model">Model:</label>${this.combo("Model", "C:/Temp/Job-1.odb", "w172", "model", true)}
            <span class="push"></span>
            ${["skipStart", "stepBack", "stepFwd", "skipEnd"].map((n) => this.tool(n))}<span class="bar"></span>
            ${["cascade", "cameraAxes", "camera"].map((n) => this.tool(n))}<span class="end"></span>
          </div>
          <div class="stage">
            <div class="toolbox">
              ${TOOLBOX.map((s) => html`<section>${s.flat().filter(Boolean).map((n) => html`<button class=${classMap({ active: n === "contour" })} aria-label=${n}>${this.icon(n, 34, 34)}</button>`)}</section>`)}
            </div>
            <div class="canvas">
              <svg viewBox="347 198 1701 778" preserveAspectRatio="xMidYMin slice" role="img" aria-label="Mises stress contour plot">
                <defs><linearGradient id="gIndenter" x2="0" y2="1"><stop stop-color="#1c2d45"/><stop offset="1" stop-color="#283950"/></linearGradient></defs>
                <path d=${outline(OUTER)} fill="#004ed9"/>
                <g transform="translate(1040 430) scale(.33333)">${CONTOURS.map((c) => svg`<path d=${lobe(c.points)} fill=${c.color}/>`)}</g>
                <path d="M910 196L937 246L1081 433L1210 494L1327 433L1427 262L1434 246L1453 196Z" fill="url(#gIndenter)" stroke="#0a0f18" stroke-width="1.500"/>
              </svg>
              <div class="legend">
                <div class="caption">S, Mises</div><div class="caption">(Avg: 75%)</div>
                <div class="scale">
                  <div class="swatches">${LEGEND_COLORS.map((c) => html`<div><i style="background:${c}"></i></div>`)}</div>
                  <ul class="labels">${LEGEND_LABELS.map((l) => html`<li>${l}</li>`)}</ul>
                </div>
              </div>
            </div>
          </div>
        </div>
      </main>`;
  }
}
